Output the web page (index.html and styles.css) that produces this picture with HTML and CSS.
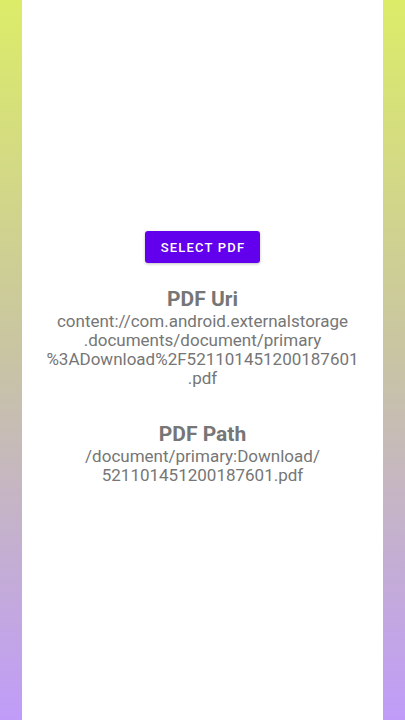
FILE: index.html
```html
<!DOCTYPE html>
<html lang="en">
<head>
  <meta charset="UTF-8">
  <meta name="viewport" content="width=device-width,initial-scale=1.0">
  <title>PDF Picker</title>
  <link rel="stylesheet" href="styles.css">
</head>
<body>
    <div class="edge"></div>
    <div class="screen">
        <button class="btn-select">SELECT PDF</button>

        <div class="block">
            <div class="label">PDF Uri</div>
            <div class="value">content://com.android.externalstorage<br>.documents/document/primary<br>%3ADownload%2F521101451200187601<br>.pdf</div>
        </div>

        <div class="block">
            <div class="label">PDF Path</div>
            <div class="value">/document/primary:Download/<br>521101451200187601.pdf</div>
        </div>
    </div>
    <div class="edge"></div>
</body>
</html>
```

FILE: styles.css
```css
    html {
        height: 100%;
    }
    body {
        margin: 0;
        height: 100%;
        display: flex;
        flex-flow: row;
        font-family: Roboto, "Noto Sans", sans-serif;
        background-color: #ffffff;
    }
    .edge {
        width: 22px;
        background: linear-gradient(to bottom, #dcec68, #c8c4a4 50%, #c09cf9);
    }
    .screen {
        flex: 1;
        background-color: #ffffff;
        display: flex;
        flex-flow: column;
        align-items: center;
        padding-top: 231px;
    }
    .btn-select {
        width: 115px;
        height: 32px;
        border: none;
        border-radius: 3px;
        background-color: #6200ee;
        color: #ffffff;
        font-family: Roboto, sans-serif;
        font-weight: 500;
        font-size: 13px;
        letter-spacing: 1.2px;
        padding: 0 0 0 1px;
        box-shadow: 0 1px 3px rgba(0, 0, 0, 0.25);
    }
    .block {
        margin-top: 24px;
        text-align: center;
        color: #767676;
    }
    .block + .block {
        margin-top: 34px;
    }
    .label {
        font-size: 21px;
        font-weight: bold;
        line-height: 25px;
    }
    .value {
        font-size: 17px;
        line-height: 19px;
    }
```
